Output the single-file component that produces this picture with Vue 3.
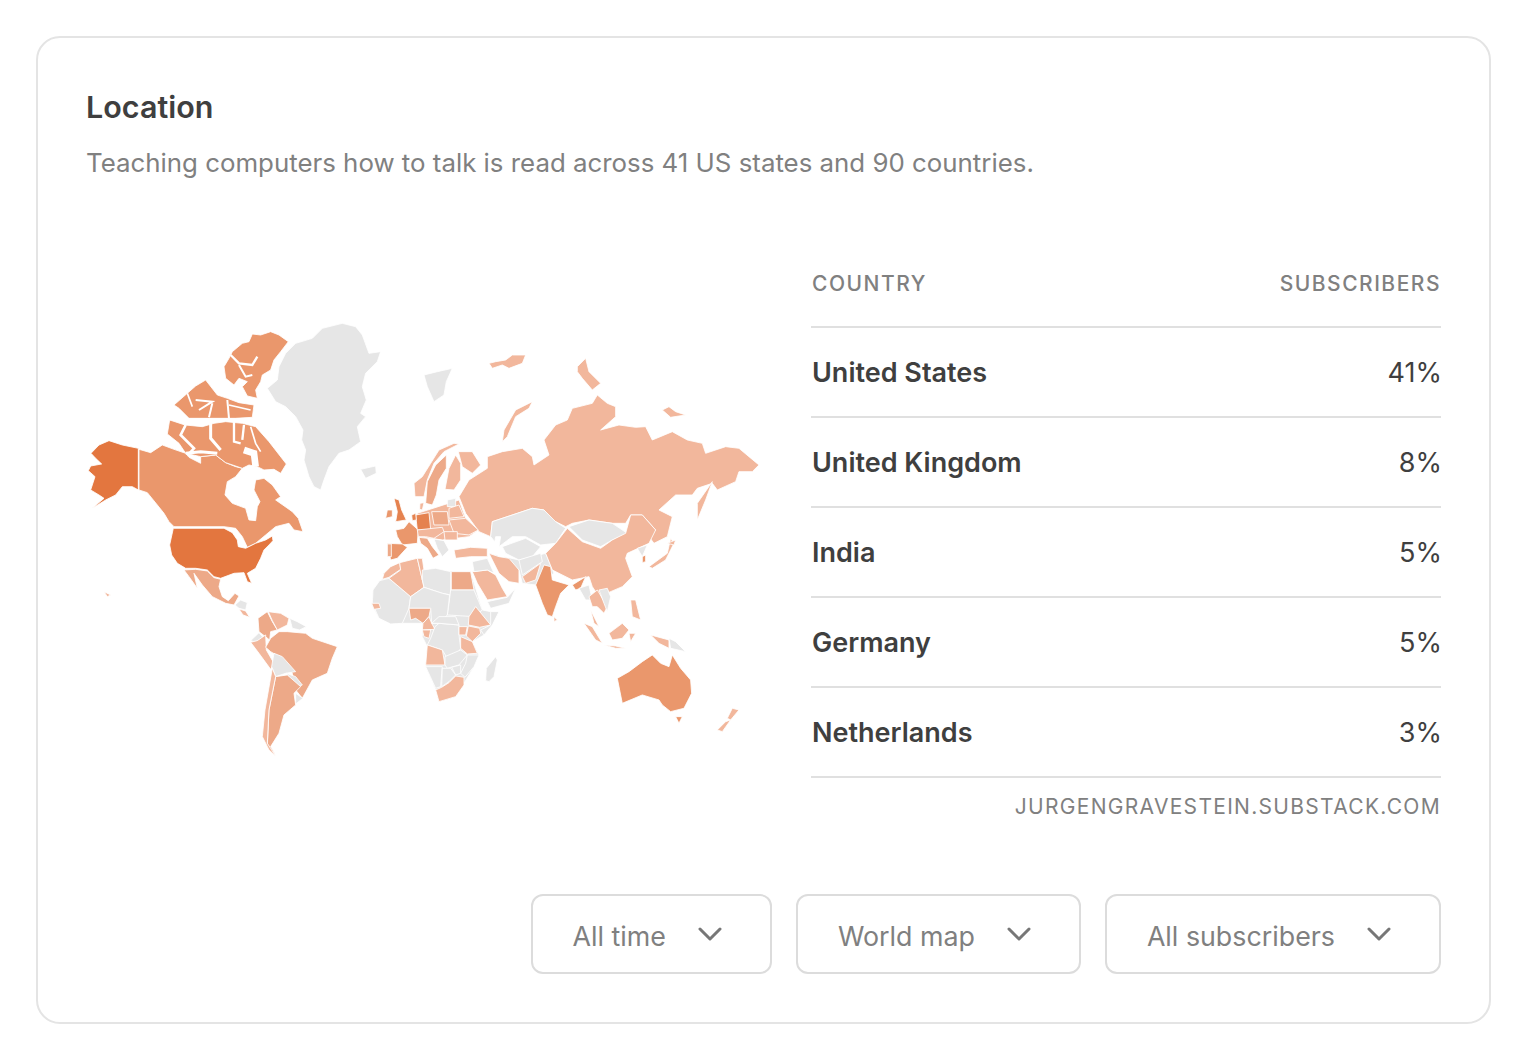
<script setup>
const rows = [
  { name: 'United States', pct: '41%' },
  { name: 'United Kingdom', pct: '8%' },
  { name: 'India', pct: '5%' },
  { name: 'Germany', pct: '5%' },
  { name: 'Netherlands', pct: '3%' }
]

const filters = ['All time', 'World map', 'All subscribers']

const c = {
  a: '#e3763f',
  b: '#e5824f',
  d: '#ea976c',
  e: '#eda988',
  f: '#f2b79c',
  g: '#e6e6e6',
  w: '#ffffff'
}

// traced in the coordinates of the west crop: page = 80 + x/3, 310 + y/3
const west = [
  [c.g, '725,540 705,530 690,500 675,450 680,420 668,390 672,360 650,320 620,290 590,275 565,235 595,210 600,170 620,130 650,100 700,85 730,55 790,40 830,50 850,75 870,130 905,125 895,155 860,190 850,230 862,270 845,310 860,320 835,350 845,395 810,420 780,430 750,470 735,510'],
  [c.g, '845,478 890,468 892,490 860,505'],
  [c.a, '36,430 60,405 90,392 130,405 178,415 178,540 160,530 130,530 110,555 80,570 40,595 75,565 60,555 35,540 48,500 28,482 35,468 68,462 50,445'],
  [c.d, '180,418 215,428 250,405 285,418 320,430 330,442 365,460 365,440 410,435 440,458 470,470 490,475 470,500 445,515 438,555 460,580 500,595 510,630 530,632 535,590 543,575 525,540 530,510 555,505 580,525 605,560 590,570 640,605 658,625 672,665 645,660 630,640 590,650 560,675 530,700 505,712 490,680 470,655 435,650 285,650 270,635 255,610 235,585 205,548 180,540'],
  [c.d, '435,170 450,145 460,125 490,100 510,95 520,72 545,75 575,65 600,75 628,95 605,125 585,150 575,180 550,195 545,215 530,240 535,265 505,258 490,230 505,215 480,205 465,225 440,205'],
  [c.d, '285,285 350,228 380,210 415,255 445,265 480,278 525,285 520,322 470,325 330,325 300,295'],
  [c.d, '265,372 272,330 318,345 370,350 405,340 440,335 490,340 530,350 570,395 622,462 605,490 585,478 555,480 535,470 510,465 490,475 440,458 410,435 365,440 320,430 300,400'],
  [c.a, '283,655 435,655 460,668 475,690 478,710 500,715 530,700 560,690 580,678 582,692 570,705 555,720 545,745 530,775 505,790 518,820 505,815 495,788 465,790 425,805 405,800 385,780 350,775 320,775 295,760 278,735 272,705'],
  [c.e, '315,780 350,778 385,783 405,803 425,808 420,830 430,860 448,872 468,850 480,858 465,885 440,880 400,860 370,825 345,790 355,835 330,800'],
  [c.g, '468,885 485,870 505,878 500,900 480,895'],
  [c.f, '480,897 500,903 512,922 492,915'],
  [c.e, '537,925 565,905 580,935 595,960 575,965 572,990 540,965'],
  [c.f, '568,905 605,910 630,925 625,945 595,960 580,932'],
  [c.g, '632,925 655,935 682,950 662,960 640,955'],
  [c.g, '515,992 540,968 552,982 530,997'],
  [c.f, '515,997 535,992 560,975 562,1020 585,1060 575,1078 540,1030'],
  [c.e, '560,1012 575,985 600,965 625,965 680,970 700,985 775,1010 760,1045 745,1090 700,1110 670,1165 650,1140 640,1090 600,1040 575,1025'],
  [c.g, '585,1030 610,1040 650,1085 620,1090 590,1100 578,1070'],
  [c.g, '622,1090 650,1100 670,1125 655,1132'],
  [c.g, '650,1150 672,1165 650,1182'],
  [c.e, '590,1100 625,1095 665,1130 645,1150 650,1185 615,1215 600,1270 575,1310 590,1335 565,1310 570,1200'],
  [c.f, '580,1075 590,1100 570,1200 565,1300 590,1338 570,1320 550,1280 558,1200'],
  [c.f, '75,845 95,855 85,860']
]

// channels between the arctic islands, drawn white over the land
const channels = [
  { w: 8, p: '320,345 305,375 345,415 330,432' },
  { w: 9, p: '320,430 365,425 415,430' },
  { w: 9, p: '395,340 395,385 425,420' },
  { w: 7, p: '465,335 465,395 485,400' },
  { w: 7, p: '495,345 490,390' },
  { w: 5, p: '515,350 530,400 545,425' },
  { w: 6, p: '350,270 400,275 360,300' },
  { w: 6, p: '400,280 390,322' },
  { w: 6, p: '445,270 450,325' },
  { w: 5, p: '450,285 515,300' },
  { w: 7, p: '455,135 480,160 520,165 535,140' },
  { w: 6, p: '480,165 500,200 520,195' },
  { w: 5, p: '325,250 340,290' },
  { w: 6, p: '270,328 525,328' },
  { w: 20, p: '495,420 525,430 530,470' }
]

// traced in the coordinates of the east crop: page = 360 + x/3, 340 + y/3
const east = [
  // land underlays so neighbouring countries meet without gaps
  [c.g, '70,715 122,668 175,655 190,690 335,695 370,810 395,815 420,815 375,885 340,905 360,945 345,980 315,1030 290,1070 240,1085 230,1050 200,980 205,920 190,890 190,850 130,850 60,835 38,795 42,750'],
  [c.g, '390,640 480,660 560,640 585,700 530,735 490,730 480,690'],
  [c.f, '175,520 300,480 320,535 358,570 330,590 250,600 180,590'],
  [c.g, '195,105 235,95 280,85 262,125 255,165 225,185 205,140'],
  [c.f, '390,70 410,65 440,60 460,45 500,45 490,70 450,85 430,75 400,85'],
  [c.f, '655,80 680,55 690,95 725,130 700,150 670,115 655,95'],
  [c.f, '910,210 930,200 950,215 980,225 935,232'],
  [c.f, '300,470 330,420 385,385 385,350 430,335 490,325 520,350 525,375 570,345 555,300 590,255 625,240 640,205 700,190 715,165 745,190 770,200 770,230 725,270 780,255 830,262 860,260 880,300 940,275 985,300 1030,310 1040,340 1100,320 1140,325 1170,350 1200,375 1180,395 1140,395 1130,425 1075,450 1060,430 1015,445 1000,465 950,465 900,510 940,530 925,590 885,610 870,590 890,570 850,525 815,525 800,550 760,550 690,540 640,550 620,560 580,540 555,510 520,505 475,520 400,545 395,590 360,575 320,520'],
  [c.f, '430,305 435,270 470,210 520,185 510,205 470,230 445,290'],
  [c.f, '1060,425 1040,480 1015,540 1015,490'],
  [c.f, '298,335 340,335 365,375 340,400 310,380'],
  [c.f, '258,448 270,385 290,345 305,370 305,420 285,450'],
  [c.f, '168,470 165,430 190,410 215,370 240,330 285,310 300,312 255,335 225,370 205,420 195,470'],
  [c.e, '200,490 205,425 230,375 262,345 262,385 240,420 232,465 220,495'],
  [c.f, '183,490 195,488 190,510 182,508'],
  [c.b, '105,475 120,480 128,510 142,540 110,545 115,515'],
  [c.d, '80,535 85,510 100,510 100,530'],
  [c.d, '110,570 135,565 150,545 178,570 175,610 130,615 115,590'],
  [c.d, '85,610 130,612 145,622 115,655 95,660'],
  [c.e, '85,612 97,612 97,650 85,650'],
  [c.b, '170,525 210,518 215,570 175,570'],
  [c.b, '158,525 170,520 172,540 160,542'],
  [c.e, '218,515 265,515 270,555 225,555'],
  [c.g, '265,480 290,475 290,500 265,500'],
  [c.f, '270,505 300,495 315,530 270,535'],
  [c.f, '270,540 320,535 358,570 330,585 285,580'],
  [c.f, '175,570 250,562 255,575 225,595 200,590 178,590'],
  [c.e, '180,592 205,595 220,620 240,645 222,655 205,625 185,610'],
  [c.f, '255,575 295,575 295,600 258,600'],
  [c.g, '225,597 255,602 270,630 250,650 235,625'],
  [c.f, '285,630 335,622 385,625 385,650 335,650 290,655'],
  [c.g, '400,545 475,520 520,505 555,510 590,545 620,565 590,610 545,615 500,590 460,590 420,620 395,590'],
  [c.g, '430,620 500,595 545,620 520,650 480,660 440,640'],
  [c.w, '410,590 425,590 420,620 435,650 420,650 405,620'],
  [c.g, '480,660 545,640 550,665 490,705'],
  [c.f, '490,710 545,670 530,720 500,730'],
  [c.f, '390,640 420,650 450,655 480,690 480,730 450,725 420,700'],
  [c.g, '630,560 690,540 760,550 805,580 760,600 725,620 670,600'],
  [c.f, '560,640 590,610 625,565 670,605 725,625 760,600 800,580 815,525 850,525 890,570 870,610 805,640 800,655 820,710 790,740 720,770 700,740 690,710 640,720 580,690'],
  [c.d, '555,675 575,680 580,720 630,735 605,760 590,800 580,830 565,825 550,790 530,735'],
  [c.d, '640,735 680,710 665,745 650,750'],
  [c.g, '660,745 690,735 700,780 680,780'],
  [c.f, '690,770 715,750 745,800 735,820 715,800 700,800'],
  [c.g, '720,750 745,745 755,770 745,815 735,790'],
  [c.f, '695,810 720,860 705,850'],
  [c.f, '585,830 595,840 585,845'],
  [c.f, '340,695 385,690 410,705 430,745 445,770 385,780 355,730'],
  [c.g, '340,665 385,655 405,700 385,690 345,695'],
  [c.g, '385,785 445,772 470,745 450,790 395,805'],
  [c.g, '835,625 865,615 850,650'],
  [c.d, '850,650 860,645 860,665 850,668'],
  [c.f, '870,680 925,640 935,595 945,610 920,660 880,685'],
  [c.f, '925,610 950,600 945,615'],
  [c.f, '75,700 95,680 122,668 125,688 90,712 70,718'],
  [c.g, '40,790 42,750 62,722 90,715 155,770 150,805 130,850 95,852 60,835'],
  [c.f, '90,715 125,690 122,668 175,655 190,720 195,742 155,770'],
  [c.f, '175,655 190,655 195,690 190,720'],
  [c.g, '190,690 230,685 275,695 275,765 250,760 195,742 190,720'],
  [c.e, '277,695 335,695 345,750 277,750'],
  [c.g, '275,750 345,750 370,810 345,830 265,825 270,790'],
  [c.g, '155,770 195,742 250,760 272,765 265,825 240,850 218,850 215,805 150,805'],
  [c.e, '150,805 215,805 210,830 192,850 170,835 155,840'],
  [c.f, '38,790 60,790 65,805 45,808'],
  [c.f, '192,850 210,830 218,850 228,868 190,870'],
  [c.f, '190,870 215,870 210,895 195,890'],
  [c.g, '228,860 240,850 300,855 300,885 305,925 290,950 262,950 250,930 205,915 215,895'],
  [c.g, '218,850 240,830 290,830 300,855 240,850'],
  [c.f, '300,860 325,860 320,885 300,885'],
  [c.f, '328,858 362,865 365,880 340,905 322,888'],
  [c.f, '330,830 350,800 395,855 362,862 328,855'],
  [c.g, '395,815 420,815 400,855 375,885 365,870 395,855'],
  [c.f, '305,890 340,905 355,940 325,942 305,925'],
  [c.f, '205,915 250,930 258,975 200,975'],
  [c.g, '258,950 305,930 325,945 300,975 265,985 258,975'],
  [c.g, '325,945 360,945 345,980 318,1012 305,1000 320,970'],
  [c.g, '200,980 250,980 248,1000 245,1040 230,1045'],
  [c.g, '250,985 275,985 290,1005 270,1025 248,1040'],
  [c.g, '278,982 305,975 305,1000 290,1005'],
  [c.f, '230,1050 248,1042 270,1028 290,1008 315,1012 315,1035 290,1070 240,1085'],
  [c.g, '380,1022 382,985 410,950 415,960 405,1010 390,1025'],
  [c.d, '775,1015 810,995 850,965 880,945 905,970 930,980 940,945 965,985 995,1020 998,1060 975,1105 935,1115 910,1095 900,1080 850,1065 790,1090'],
  [c.d, '950,1130 970,1130 960,1150'],
  [c.f, '1120,1105 1140,1110 1115,1140 1105,1135'],
  [c.f, '1100,1145 1075,1170 1090,1175 1115,1140'],
  [c.f, '675,850 700,860 730,910 710,900'],
  [c.f, '735,915 770,918 800,925 770,925'],
  [c.f, '750,880 790,850 810,870 790,895 760,900'],
  [c.f, '810,880 830,880 815,905'],
  [c.f, '875,885 930,900 930,925 900,910'],
  [c.g, '930,895 950,905 980,935 935,925'],
  [c.f, '815,780 830,780 845,840 820,830']
]
</script>

<template>
  <div class="page">
    <div class="card">
      <h2 class="title">Location</h2>
      <p class="subtitle">Teaching computers how to talk is read across 41 US states and 90 countries.</p>

      <div class="content">
        <svg class="map" viewBox="85 320 680 440" width="680" height="440">
          <g transform="translate(80 310) scale(0.3333)">
            <polygon
              v-for="(shape, i) in west"
              :key="i"
              :points="shape[1]"
              :fill="shape[0]"
              stroke="#fff"
              stroke-width="2.5"
              stroke-linejoin="round"
            />
            <polyline
              v-for="(ch, i) in channels"
              :key="'ch' + i"
              :points="ch.p"
              :stroke-width="ch.w"
              fill="none"
              stroke="#fff"
            />
          </g>
          <g transform="translate(360 340) scale(0.3333)">
            <polygon
              v-for="(shape, i) in east"
              :key="i"
              :points="shape[1]"
              :fill="shape[0]"
              stroke="#fff"
              stroke-width="2.5"
              stroke-linejoin="round"
            />
          </g>
        </svg>

        <div class="table-wrap">
          <div class="table-head">
            <span>COUNTRY</span>
            <span>SUBSCRIBERS</span>
          </div>
          <div v-for="row in rows" :key="row.name" class="table-row">
            <span class="country">{{ row.name }}</span>
            <span class="pct">{{ row.pct }}</span>
          </div>
          <div class="source">JURGENGRAVESTEIN.SUBSTACK.COM</div>
        </div>
      </div>

      <div class="filters">
        <button v-for="f in filters" :key="f" class="filter">
          <span class="filter-label">{{ f }}</span>
          <svg width="24" height="16" viewBox="0 0 24 16" fill="none">
            <path d="M2 3 L12 13 L22 3" stroke="#777" stroke-width="3" stroke-linecap="round" stroke-linejoin="round" />
          </svg>
        </button>
      </div>
    </div>
  </div>
</template>

<style scoped>
.page {
  padding: 36px 35px 36px 36px;
  font-family: Inter, "Liberation Sans", sans-serif;
}

.card {
  border: 2px solid #e4e4e4;
  border-radius: 24px;
  padding: 49px 48px 48px 48px;
  height: 988px;
  box-sizing: border-box;
}

.title {
  margin: 0;
  font-size: 30.5px;
  line-height: 40px;
  font-weight: 600;
  color: #3f3f3f;
}

.subtitle {
  margin: 18px 0 0;
  font-size: 25.85px;
  line-height: 36px;
  color: #808080;
}

.content {
  display: flex;
  justify-content: space-between;
  align-items: center;
  margin-top: 79px;
  margin-left: -2px;
}

.table-wrap {
  width: 630px;
}

.table-head {
  display: flex;
  justify-content: space-between;
  align-items: center;
  height: 46px;
  padding: 0 0 20px 1px;
  border-bottom: 2px solid #e0e0e0;
  font-size: 21px;
  font-weight: 500;
  letter-spacing: 1.5px;
  color: #808080;
}

.table-row {
  display: flex;
  justify-content: space-between;
  align-items: center;
  height: 88px;
  padding-left: 1px;
  border-bottom: 2px solid #e0e0e0;
}

.country {
  font-size: 27px;
  font-weight: 600;
  color: #3f3f3f;
}

.pct {
  font-size: 27px;
  margin-right: -1px;
  color: #3f3f3f;
}

.source {
  margin-top: 16px;
  text-align: right;
  font-size: 21px;
  letter-spacing: 1.3px;
  line-height: 26px;
  color: #808080;
}

.filters {
  display: flex;
  justify-content: flex-end;
  gap: 24px;
  margin-top: 74px;
}

.filter {
  display: flex;
  align-items: center;
  gap: 32px;
  height: 80px;
  padding: 0 48px 0 40px;
  background: #fff;
  border: 2px solid #dcdcdc;
  border-radius: 12px;
  font-family: inherit;
  font-size: 26.8px;
  color: #808080;
}

.filter-label {
  padding-top: 3px;
}
</style>
